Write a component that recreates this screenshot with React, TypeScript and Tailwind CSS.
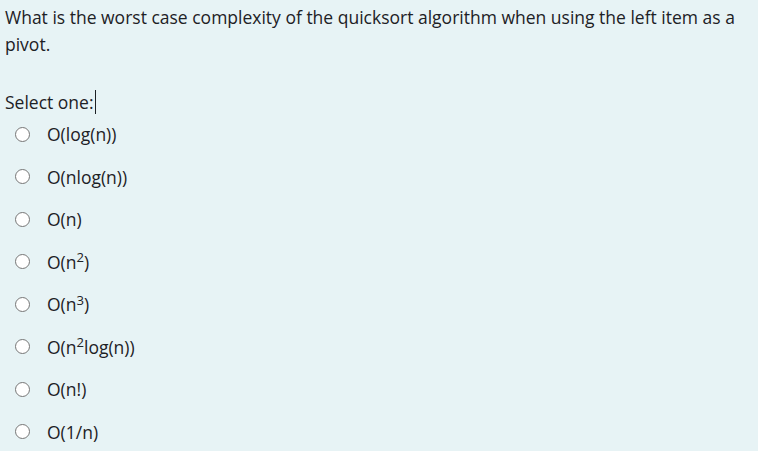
const options = [
  <>O(log(n))</>,
  <>O(nlog(n))</>,
  <>O(n)</>,
  <>
    O(n<sup>2</sup>)
  </>,
  <>
    O(n<sup>3</sup>)
  </>,
  <>
    O(n<sup>2</sup>log(n))
  </>,
  <>O(n!)</>,
  <>O(1/n)</>,
];

export default function App() {
  return (
    <div
      className="w-[758px] h-[451px] bg-[#e7f3f5] text-[#1d2125] pl-[5px] pt-[4px] overflow-hidden"
      style={{ fontFamily: '"Open Sans", "Noto Sans", sans-serif' }}
    >
      <p className="text-[17.5px] leading-[27px] w-[750px]">
        What is the worst case complexity of the quicksort algorithm when using the left item as a pivot.
      </p>

      <p className="mt-[33px] text-[17.5px] leading-[22px]">
        Select one<span className="border-r border-[#1d2125] pr-[1px]">:</span>
      </p>

      <div className="flex flex-col">
        {options.map((label, i) => (
          <label key={i} className="flex items-center h-[42.5px] pl-[10px]">
            <span className="w-[15px] h-[15px] rounded-full border border-[#767676] bg-white shrink-0" />
            <span className="ml-[17px] text-[17.5px] leading-[24px]">{label}</span>
          </label>
        ))}
      </div>
    </div>
  );
}
